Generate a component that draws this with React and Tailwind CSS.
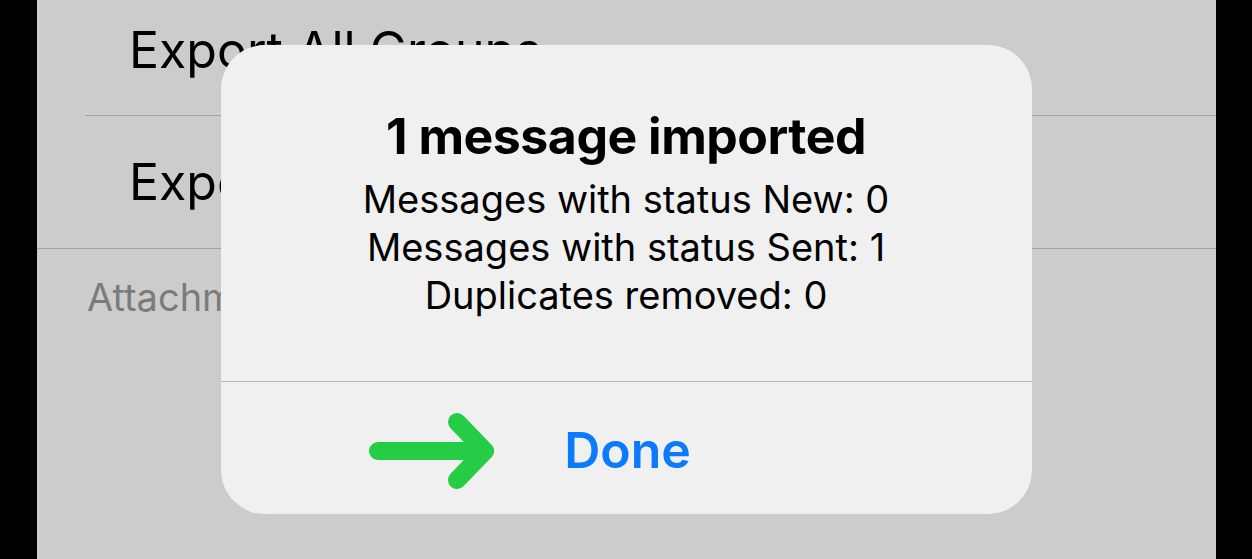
import React from 'react'

const font = { fontFamily: 'Inter, "Noto Sans", sans-serif' }

function Arrow() {
  return (
    <svg
      className="absolute left-[139px] top-[25px]"
      width="140"
      height="90"
      viewBox="0 0 140 90"
      fill="none"
      stroke="#25cc45"
      strokeWidth="18"
      strokeLinecap="round"
      strokeLinejoin="round"
    >
      <path d="M18 44H125" />
      <path d="M97 15L125 44L97 73" />
    </svg>
  )
}

export default function App() {
  return (
    <div className="relative h-[559px] w-[1252px] overflow-hidden bg-black flex" style={font}>
      <div className="w-[37px] bg-black" />
      <div className="flex-1 bg-[#cccccc] overflow-hidden">
        <div className="-mt-[16px]">
          <div className="ml-[48px] pl-[44px] h-[132px] flex items-center border-b border-[#a3a3a3]">
            <span className="text-[50px] leading-[60px] text-black whitespace-nowrap">Export All Groups</span>
          </div>
          <div className="pl-[92px] h-[133px] flex items-center border-b border-[#a3a3a3]">
            <span className="text-[50px] leading-[60px] text-black whitespace-nowrap">Export All Messages</span>
          </div>
          <div className="pl-[50px] pt-[24px]">
            <span className="text-[38px] leading-[48px] text-[#7b7b7b] whitespace-nowrap">Attachments</span>
          </div>
        </div>
      </div>
      <div className="w-[36px] bg-black" />

      <div className="absolute inset-0 flex items-center justify-center">
        <div className="w-[811px] h-[469px] rounded-[44px] bg-[#f0f0f0] flex flex-col overflow-hidden">
          <div className="h-[336px] pt-[61px] flex flex-col items-center text-black">
            <div className="text-[50px] leading-[60px] font-bold tracking-[-0.5px]">1 message imported</div>
            <div className="mt-[9px] text-[38px] leading-[48px] text-center">
              <div>Messages with status New: 0</div>
              <div>Messages with status Sent: 1</div>
              <div>Duplicates removed: 0</div>
            </div>
          </div>
          <div className="h-px bg-[#b5b5b5]" />
          <div className="relative flex-1 flex items-center justify-center pt-[4px] pl-[3px]">
            <Arrow />
            <span className="text-[50px] leading-[60px] font-semibold text-[#0a7aff]">Done</span>
          </div>
        </div>
      </div>
    </div>
  )
}
